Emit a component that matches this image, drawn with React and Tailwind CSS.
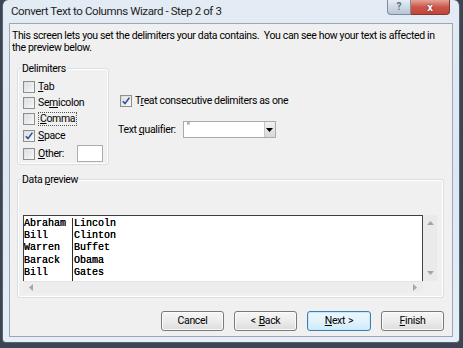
import React from "react";

function Check({ checked }) {
  return (
    <span className="relative flex h-[12px] w-[12px] shrink-0 items-center justify-center border border-[#8e8f8f] bg-gradient-to-br from-[#d4d7dc] to-[#fafafa]">
      <span className="absolute inset-[1px] border border-[#f4f4f4]/60" />
      {checked && (
        <svg width="10" height="10" viewBox="0 0 10 10" className="relative">
          <path d="M1.8 5.2 L4 7.6 L8.4 1.6" fill="none" stroke="#2b4f96" strokeWidth="1.6" />
        </svg>
      )}
    </span>
  );
}

function Button({ children, focused }) {
  return (
    <button
      type="button"
      className={
        focused
          ? "flex h-[20px] w-[64px] items-center justify-center rounded-[3px] border border-[#3c7fb1] bg-gradient-to-b from-[#eaf6fd] via-[#e3f3fc] to-[#cdebfb] text-black shadow-[inset_0_0_0_1px_#c9e7f8]"
          : "flex h-[20px] w-[63px] items-center justify-center rounded-[3px] border border-[#7a7a7a] bg-gradient-to-b from-[#f6f6f6] via-[#ececec] to-[#dcdcdc] text-black shadow-[inset_0_0_0_1px_#fbfbfb]"
      }
    >
      {children}
    </button>
  );
}

const rows = [
  ["Abraham", "Lincoln"],
  ["Bill", "Clinton"],
  ["Warren", "Buffet"],
  ["Barack", "Obama"],
  ["Bill", "Gates"],
];

export default function App() {
  return (
    <div className="h-[348px] w-[463px] overflow-hidden bg-[#3b4554] font-['Roboto','Liberation_Sans',sans-serif] text-[10.5px] tracking-[-0.35px] text-black">
      <div className="ml-[2px] flex h-[343px] w-[458px] flex-col rounded-t-[6px] rounded-b-[4px] border-x border-b border-[#59636f] bg-gradient-to-b from-[#e3ebf4] via-[#dde7f2] to-[#e6eef7]">
        {/* title bar */}
        <div className="flex h-[23px] shrink-0 items-start">
          <div className="mt-[4px] ml-[8px] flex-1 text-[11.5px] leading-[15px] tracking-[-0.4px] text-[#1e1e1e]">
            Convert Text to Columns Wizard - Step 2 of 3
          </div>
          <div className="mr-[9px] flex h-[15px]">
            <div className="flex w-[24px] items-center justify-center rounded-bl-[4px] border border-t-0 border-[#7f8c9b] bg-gradient-to-b from-[#e6edf4] to-[#b7c6d6] text-[10px] font-bold leading-none tracking-normal text-[#5d6f86]">
              ?
            </div>
            <div className="flex w-[39px] items-center justify-center rounded-br-[4px] border border-t-0 border-l-0 border-[#7d3b33] bg-gradient-to-b from-[#e6a497] via-[#c9574a] to-[#c3453a] text-[11px] font-bold leading-none tracking-normal text-white [text-shadow:0_0_2px_#5a1d16]">
              x
            </div>
          </div>
        </div>

        {/* client area */}
        <div className="mx-[6px] flex h-[314px] flex-col border border-[#9aa7b6] bg-[#f0f0f0]">
          <p className="pt-[6px] pl-[2px] leading-[12px]">
            This screen lets you set the delimiters your data contains.&nbsp; You can see how your text is affected in
            <br />
            the preview below.
          </p>

          <div className="mt-[7px] flex">
            {/* Delimiters group */}
            <div className="mt-[7px] ml-[7px] flex h-[97px] w-[92px] flex-col rounded-[3px] border border-[#d5dfe5] shadow-[inset_0_0_0_1px_#fff]">
              <div className="-mt-[7px] ml-[3px] w-fit bg-[#f0f0f0] px-[1px] leading-[13px]">Delimiters</div>
              <div className="mt-[4px] flex h-[16px] items-center gap-[3px] pl-[5px]">
                <Check />
                <span><u>T</u>ab</span>
              </div>
              <div className="flex h-[16px] items-center gap-[3px] pl-[5px]">
                <Check />
                <span>Se<u>m</u>icolon</span>
              </div>
              <div className="flex h-[16px] items-center gap-[3px] pl-[5px]">
                <Check />
                <span className="border border-dotted border-[#555] px-[1px] leading-[12px]"><u>C</u>omma</span>
              </div>
              <div className="flex h-[17px] items-center gap-[3px] pl-[5px]">
                <Check checked />
                <span><u>S</u>pace</span>
              </div>
              <div className="flex h-[19px] items-center gap-[3px] pl-[5px]">
                <Check />
                <span><u>O</u>ther:</span>
                <span className="ml-[10px] h-[17px] w-[26px] border border-[#abadb3] bg-white" />
              </div>
            </div>

            {/* right column */}
            <div className="ml-[9px] flex flex-col">
              <div className="mt-[32px] flex h-[16px] items-center gap-[3px] pl-[2px]">
                <Check checked />
                <span>T<u>r</u>eat consecutive delimiters as one</span>
              </div>
              <div className="mt-[12px] flex h-[17px] items-center">
                <span>Text <u>q</u>ualifier:</span>
                <div className="ml-[7px] flex h-[17px] w-[93px] border border-[#a5acb5] bg-white">
                  <span className="flex-1 pl-[3px] text-[10px] leading-[10px] text-[#a0522d]">"</span>
                  <span className="flex w-[11px] items-center justify-center border-l border-[#c3c7cc] bg-gradient-to-b from-[#f2f2f2] to-[#d8d8d8]">
                    <svg width="7" height="4" viewBox="0 0 7 4">
                      <path d="M0 0 H7 L3.5 4 Z" fill="#000" />
                    </svg>
                  </span>
                </div>
              </div>
            </div>
          </div>

          {/* Data preview group */}
          <div className="mt-[14px] ml-[7px] flex h-[119px] w-[427px] flex-col rounded-[3px] border border-[#d5dfe5] shadow-[inset_0_0_0_1px_#fff]">
            <div className="-mt-[7px] ml-[3px] w-fit bg-[#f0f0f0] px-[1px] leading-[13px]">
              Data <u>p</u>review
            </div>
            <div className="mt-[29px] ml-[5px] flex w-[414px] flex-col">
              <div className="flex">
                <div className="flex h-[66px] w-[400px] border-x border-t border-[#404040] bg-white pt-[2px] font-['Liberation_Mono',monospace] text-[10px] leading-[12.2px] tracking-normal text-black [text-shadow:0_0_0.4px_#000]">
                  <div className="w-[49px] border-r border-[#303030]">
                    {rows.map((r, i) => (
                      <div key={i}>{r[0]}</div>
                    ))}
                  </div>
                  <div className="pl-[1px]">
                    {rows.map((r, i) => (
                      <div key={i}>{r[1]}</div>
                    ))}
                  </div>
                </div>
                <div className="flex h-[66px] w-[14px] flex-col items-center justify-between bg-[#eaeaea] py-[6px]">
                  <svg width="7" height="4" viewBox="0 0 7 4">
                    <path d="M0 4 L3.5 0 L7 4 Z" fill="#a6a6a6" />
                  </svg>
                  <svg width="7" height="4" viewBox="0 0 7 4">
                    <path d="M0 0 H7 L3.5 4 Z" fill="#a6a6a6" />
                  </svg>
                </div>
              </div>
              <div className="flex h-[12px]">
                <div className="flex w-[400px] items-center justify-between border-t border-[#e2e2e2] bg-[#ededed] px-[6px]">
                  <svg width="4" height="7" viewBox="0 0 4 7">
                    <path d="M4 0 V7 L0 3.5 Z" fill="#a6a6a6" />
                  </svg>
                  <svg width="4" height="7" viewBox="0 0 4 7">
                    <path d="M0 0 V7 L4 3.5 Z" fill="#a6a6a6" />
                  </svg>
                </div>
                <div className="w-[14px] bg-[#f0f0f0]" />
              </div>
            </div>
          </div>

          {/* buttons */}
          <div className="mt-[13px] mr-[8px] flex justify-end gap-[10px]">
            <Button>Cancel</Button>
            <Button>
              <span className="mr-[3px]">&lt;</span>
              <u>B</u>ack
            </Button>
            <Button focused>
              <u>N</u>ext<span className="ml-[3px]">&gt;</span>
            </Button>
            <Button><u>F</u>inish</Button>
          </div>
        </div>
      </div>
    </div>
  );
}
